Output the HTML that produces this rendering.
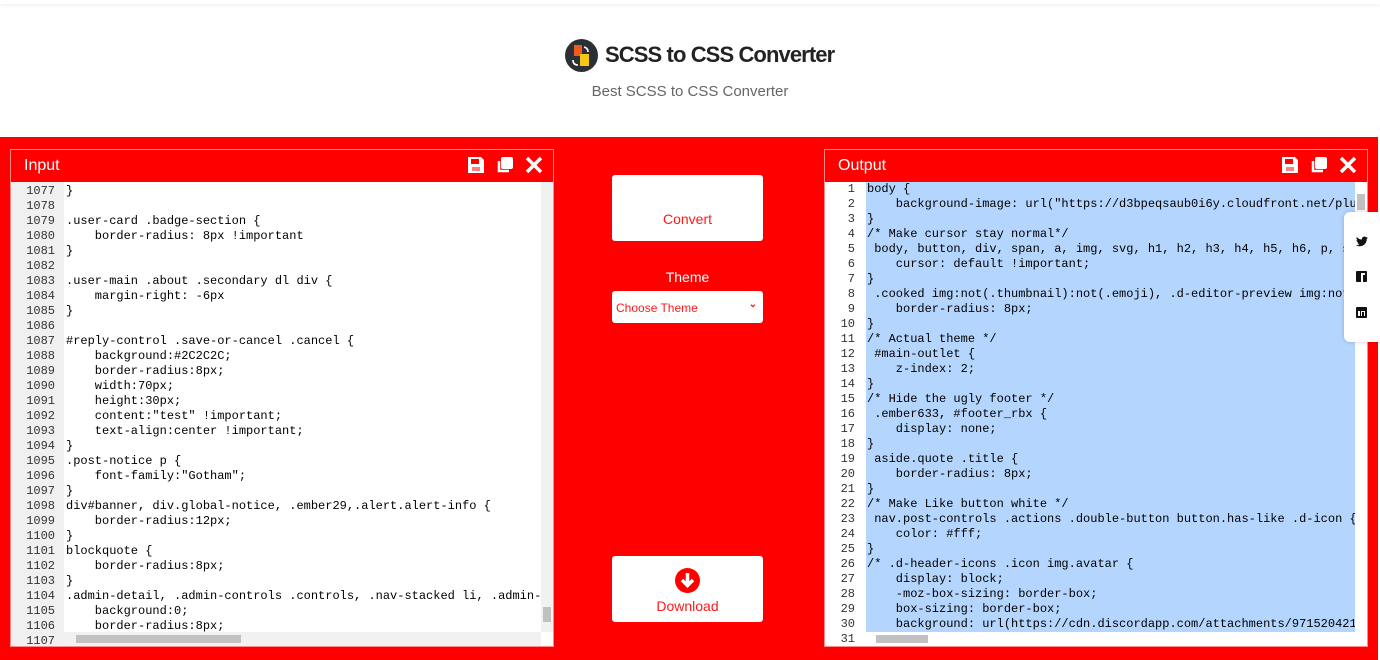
<!DOCTYPE html>
<html><head><meta charset="utf-8"><style>
*{box-sizing:border-box;margin:0;padding:0}
body{width:1380px;height:660px;overflow:hidden;background:#fff;font-family:"Liberation Sans",sans-serif;position:relative}
.topbar{position:absolute;left:0;top:0;width:1380px;height:4px;box-shadow:0 1px 4px rgba(0,0,0,.08)}
.title{position:absolute;left:565px;top:38px;height:34px;display:flex;align-items:center}
.title span{font-size:22px;font-weight:bold;color:#222;margin-left:7px;letter-spacing:-0.9px}
.sub{position:absolute;left:0;width:1380px;text-align:center;top:83px;font-size:15px;color:#666;padding-left:0}
.band{position:absolute;left:0;top:137px;width:1378px;height:523px;background:#ff0000}
.panel{position:absolute;top:149px;height:498px;background:#fff;border:1px solid #f88}
.ph{height:32px;background:#ff0000;color:#fff;font-size:16px;padding:7px 0 0 13px;position:relative}
.icons{position:absolute;right:10px;top:6px;display:flex;gap:11px}
.code{position:absolute;top:32px;left:0;right:0;bottom:0;overflow:hidden;font-family:"Liberation Mono",monospace;font-size:12px;line-height:15px;color:#000}
.gut{position:absolute;left:0;top:0;bottom:0;background:#f0f0f0}
.lines{position:absolute;left:0;white-space:pre}
.n{display:inline-block;text-align:right;color:#333}
.i .n{width:44px;margin-right:11px}
.o .n{width:30px;margin-right:12px}
.vs{position:absolute;right:0;top:0;width:12px;bottom:14px;background:#f1f1f1}
.hs{position:absolute;left:0;right:0;bottom:0;height:14px;background:#f1f1f1}
.btn{position:absolute;left:612px;width:151px;background:#fff;border-radius:3px;color:#ff1a1a;text-align:center;font-size:14px}
.social{position:absolute;left:1344px;top:212px;width:36px;height:130px;background:#fff;border-radius:6px 0 0 6px;box-shadow:0 0 4px rgba(0,0,0,.2)}
</style></head><body>
<div class="topbar"></div>
<div class="title">
<svg width="33" height="33" viewBox="0 0 33 33"><circle cx="16.5" cy="16.5" r="16.5" fill="#2b2f36"/><rect x="9" y="6" width="8" height="11" fill="#f05a1a"/><rect x="15" y="15" width="9" height="12" fill="#f5c518"/><path d="M19 8 q4 1 4 5" stroke="#fff" stroke-width="1.6" fill="none"/><path d="M8 21 q0 5 5 5" stroke="#fff" stroke-width="1.6" fill="none"/></svg>
<span>SCSS to CSS Converter</span></div>
<div class="sub">Best SCSS to CSS Converter</div>
<div class="band"></div>

<div class="panel" style="left:10px;width:544px">
<div class="ph">Input<div class="icons">
<svg width="18" height="18" viewBox="0 0 18 18"><path d="M1 1h13l3 3v13H1z" fill="#fff"/><rect x="4" y="3" width="8" height="5" fill="#f00"/><rect x="5" y="11" width="8" height="4" fill="#f00" opacity=".5"/></svg>
<svg width="18" height="18" viewBox="0 0 18 18"><rect x="5" y="1" width="12" height="12" rx="2" fill="#fff"/><path d="M3 5v10h10" stroke="#fff" stroke-width="2.5" fill="none"/></svg>
<svg width="18" height="18" viewBox="0 0 18 18"><path d="M2 2L16 16M16 2L2 16" stroke="#fff" stroke-width="3.5"/></svg>
</div></div>
<div class="code i">
<div class="gut" style="width:53px"></div>
<div class="lines" style="top:-13px"><span class="n">1076</span>    padding: 0px;
<span class="n">1077</span>}
<span class="n">1078</span>
<span class="n">1079</span>.user-card .badge-section {
<span class="n">1080</span>    border-radius: 8px !important
<span class="n">1081</span>}
<span class="n">1082</span>
<span class="n">1083</span>.user-main .about .secondary dl div {
<span class="n">1084</span>    margin-right: -6px
<span class="n">1085</span>}
<span class="n">1086</span>
<span class="n">1087</span>#reply-control .save-or-cancel .cancel {
<span class="n">1088</span>    background:#2C2C2C;
<span class="n">1089</span>    border-radius:8px;
<span class="n">1090</span>    width:70px;
<span class="n">1091</span>    height:30px;
<span class="n">1092</span>    content:"test" !important;
<span class="n">1093</span>    text-align:center !important;
<span class="n">1094</span>}
<span class="n">1095</span>.post-notice p {
<span class="n">1096</span>    font-family:"Gotham";
<span class="n">1097</span>}
<span class="n">1098</span>div#banner, div.global-notice, .ember29,.alert.alert-info {
<span class="n">1099</span>    border-radius:12px;
<span class="n">1100</span>}
<span class="n">1101</span>blockquote {
<span class="n">1102</span>    border-radius:8px;
<span class="n">1103</span>}
<span class="n">1104</span>.admin-detail, .admin-controls .controls, .nav-stacked li, .admin-na
<span class="n">1105</span>    background:0;
<span class="n">1106</span>    border-radius:8px;
<span class="n">1107</span></div>
<div class="vs"><div style="position:absolute;top:425px;left:2px;width:8px;height:15px;background:#c1c1c1"></div></div>
<div class="hs" style="left:53px;right:12px"><div style="position:absolute;left:12px;top:3px;width:165px;height:8px;background:#c1c1c1"></div></div>
</div></div>

<div class="btn" style="top:175px;height:66px;padding-top:36px">Convert</div>
<div style="position:absolute;left:612px;width:151px;top:269px;text-align:center;color:#fff;font-size:14px">Theme</div>
<div class="btn" style="top:291px;height:32px;text-align:left;font-size:12px;padding:10px 0 0 4px">Choose Theme<span style="position:absolute;right:6px;top:8px;font-size:10px;font-weight:bold">&#8964;</span></div>
<div class="btn" style="top:556px;height:66px;padding-top:42px">
<svg style="position:absolute;left:63px;top:12px" width="25" height="25" viewBox="0 0 25 25"><circle cx="12.5" cy="12.5" r="12.5" fill="#ff0000"/><path d="M12.5 5v11M7 12l5.5 5.5L18 12" stroke="#fff" stroke-width="3.5" fill="none"/></svg>Download</div>

<div class="panel" style="left:824px;width:544px">
<div class="ph">Output<div class="icons">
<svg width="18" height="18" viewBox="0 0 18 18"><path d="M1 1h13l3 3v13H1z" fill="#fff"/><rect x="4" y="3" width="8" height="5" fill="#f00"/><rect x="5" y="11" width="8" height="4" fill="#f00" opacity=".5"/></svg>
<svg width="18" height="18" viewBox="0 0 18 18"><rect x="5" y="1" width="12" height="12" rx="2" fill="#fff"/><path d="M3 5v10h10" stroke="#fff" stroke-width="2.5" fill="none"/></svg>
<svg width="18" height="18" viewBox="0 0 18 18"><path d="M2 2L16 16M16 2L2 16" stroke="#fff" stroke-width="3.5"/></svg>
</div></div>
<div class="code o">
<div style="position:absolute;left:41px;right:12px;top:0;bottom:14px;background:#b4d5fe"></div>
<div class="lines" style="top:0"><span class="n">1</span>body {
<span class="n">2</span>    background-image: url("https://d3bpeqsaub0i6y.cloudfront.net/plugi
<span class="n">3</span>}
<span class="n">4</span>/* Make cursor stay normal*/
<span class="n">5</span> body, button, div, span, a, img, svg, h1, h2, h3, h4, h5, h6, p, sum
<span class="n">6</span>    cursor: default !important;
<span class="n">7</span>}
<span class="n">8</span> .cooked img:not(.thumbnail):not(.emoji), .d-editor-preview img:not(.
<span class="n">9</span>    border-radius: 8px;
<span class="n">10</span>}
<span class="n">11</span>/* Actual theme */
<span class="n">12</span> #main-outlet {
<span class="n">13</span>    z-index: 2;
<span class="n">14</span>}
<span class="n">15</span>/* Hide the ugly footer */
<span class="n">16</span> .ember633, #footer_rbx {
<span class="n">17</span>    display: none;
<span class="n">18</span>}
<span class="n">19</span> aside.quote .title {
<span class="n">20</span>    border-radius: 8px;
<span class="n">21</span>}
<span class="n">22</span>/* Make Like button white */
<span class="n">23</span> nav.post-controls .actions .double-button button.has-like .d-icon {
<span class="n">24</span>    color: #fff;
<span class="n">25</span>}
<span class="n">26</span>/* .d-header-icons .icon img.avatar {
<span class="n">27</span>    display: block;
<span class="n">28</span>    -moz-box-sizing: border-box;
<span class="n">29</span>    box-sizing: border-box;
<span class="n">30</span>    background: url(https://cdn.discordapp.com/attachments/97152042185
<span class="n">31</span>    width: 40px !important;</div>
<div class="vs" style="background:#fff"><div style="position:absolute;top:12px;left:2px;width:8px;height:16px;background:#c1c1c1"></div></div>
<div class="hs" style="left:41px;right:12px;background:#fff"><div style="position:absolute;left:10px;top:3px;width:52px;height:8px;background:#c1c1c1"></div></div>
</div></div>

<div class="social">
<svg style="position:absolute;left:12px;top:24px" width="12" height="11" viewBox="0 0 24 20"><path d="M24 2.4a10 10 0 0 1-2.8.8A5 5 0 0 0 23.3.5a10 10 0 0 1-3.1 1.2A4.9 4.9 0 0 0 11.8 6 14 14 0 0 1 1.7.9a4.9 4.9 0 0 0 1.5 6.6A5 5 0 0 1 1 6.9a4.9 4.9 0 0 0 3.9 4.8 5 5 0 0 1-2.2.1 4.9 4.9 0 0 0 4.6 3.4A9.9 9.9 0 0 1 0 17.2 14 14 0 0 0 7.5 19.4c9 0 14-7.5 14-14v-.6A10 10 0 0 0 24 2.4z" fill="#111"/></svg>
<div style="position:absolute;left:12px;top:59px;width:11px;height:11px;background:#111;border-radius:1px"></div>
<div style="position:absolute;left:17px;top:61px;width:4px;height:9px;border-left:2px solid #fff;border-top:2px solid #fff"></div>
<div style="position:absolute;left:12px;top:95px;width:11px;height:11px;background:#111;border-radius:1px"></div>
<div style="position:absolute;left:14px;top:99px;width:1.5px;height:5px;background:#fff"></div>
<div style="position:absolute;left:17px;top:99px;width:4px;height:5px;border:1.5px solid #fff;border-bottom:none"></div>
</div>
</body></html>
